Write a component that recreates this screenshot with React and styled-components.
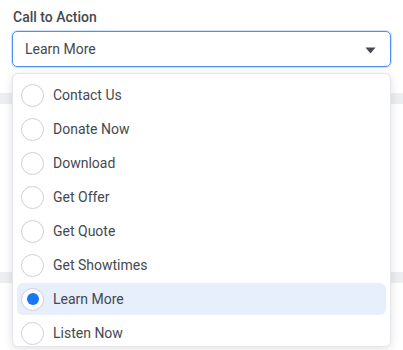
import styled, { createGlobalStyle } from "styled-components";

const GlobalStyle = createGlobalStyle`
  body {
    margin: 0;
    background: #fff;
    font-family: Roboto, "Liberation Sans", sans-serif;
    overflow: hidden;
  }
`;

const Page = styled.div`
  padding: 9px 12px 0;
  width: 403px;
  box-sizing: border-box;
`;

const Label = styled.div`
  font-size: 14px;
  font-weight: 500;
  color: #444950;
  line-height: 16px;
  padding-left: 1px;
  margin-bottom: 6px;
`;

const SelectWrap = styled.div`
  position: relative;
  z-index: 2;
`;

const Select = styled.div`
  height: 36px;
  box-sizing: border-box;
  border: 1px solid #4f8ff0;
  border-radius: 5px;
  box-shadow: 0 0 0 1px rgba(79, 143, 240, 0.25);
  display: flex;
  align-items: center;
  justify-content: space-between;
  padding: 0 14px 0 12px;
  font-size: 14px;
  color: #444950;
`;

const Caret = styled.svg`
  width: 11px;
  height: 7px;
  margin-top: 2px;
`;

const Menu = styled.div`
  position: absolute;
  top: calc(100% + 6px);
  left: 0;
  right: 0;
  height: 274px;
  overflow: hidden;
  background: #fff;
  border: 1px solid #e4e6eb;
  border-radius: 6px;
  box-shadow: 0 2px 10px rgba(0, 0, 0, 0.12);
  padding: 3px 0 0;
  box-sizing: border-box;
`;

const Option = styled.div`
  height: 32px;
  margin: 2px 4px;
  border-radius: 6px;
  display: flex;
  align-items: center;
  gap: 9px;
  padding-left: 4px;
  font-size: 14px;
  color: #444950;
  background: ${(p) => (p.$selected ? "#e7eefc" : "transparent")};
`;

const Radio = styled.span`
  width: 23px;
  height: 23px;
  box-sizing: border-box;
  border-radius: 50%;
  border: 1px solid #ccd0d5;
  background: #fff;
  display: flex;
  align-items: center;
  justify-content: center;
  flex-shrink: 0;

  &::after {
    content: "";
    width: 12px;
    height: 12px;
    border-radius: 50%;
    background: #1877f2;
    display: ${(p) => (p.$checked ? "block" : "none")};
  }
`;

const Divider = styled.div`
  height: 11px;
  margin: ${(p) => p.$top || 0}px -12px 0;
  background: #eceef1;
`;

const Section = styled.div`
  height: ${(p) => p.$h}px;
`;

const BodyText = styled.div`
  padding-top: 64px;
  font-size: 14px;
  color: #444950;
  line-height: 18px;
  padding-left: 1px;
`;

const options = [
  "Contact Us",
  "Donate Now",
  "Download",
  "Get Offer",
  "Get Quote",
  "Get Showtimes",
  "Learn More",
  "Listen Now",
];

export default function App() {
  const selected = "Learn More";
  return (
    <Page>
      <GlobalStyle />
      <Label>Call to Action</Label>
      <SelectWrap>
        <Select>
          <span>{selected}</span>
          <Caret viewBox="0 0 11 7">
            <path d="M0.5 0.5h10l-4.6 5.6a0.6 0.6 0 0 1-0.8 0z" fill="#444950" />
          </Caret>
        </Select>
        <Menu>
          {options.map((o) => (
            <Option key={o} $selected={o === selected}>
              <Radio $checked={o === selected} />
              {o}
            </Option>
          ))}
        </Menu>
      </SelectWrap>
      <Divider $top={26} />
      <Section $h={168} />
      <Divider />
      <BodyText>Tell people what your business does and why</BodyText>
    </Page>
  );
}
